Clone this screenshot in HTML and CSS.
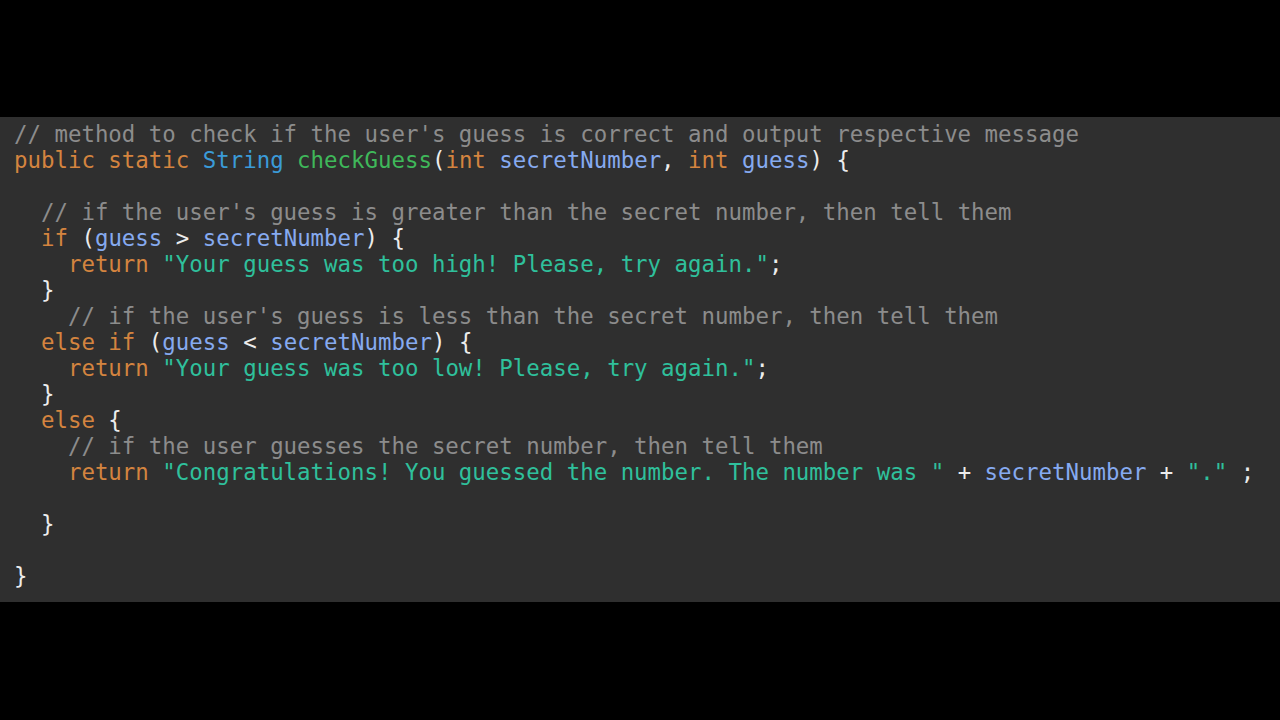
FILE: index.html
```html
<!DOCTYPE html>
<html lang="en">
<head>
<meta charset="utf-8">
<title>checkGuess</title>
<link rel="stylesheet" href="styles.css">
</head>
<body>
<main class="frame">
<pre class="code"><span class="c">// method to check if the user's guess is correct and output respective message</span>
<span class="k">public static</span> <span class="t">String</span> <span class="f">checkGuess</span>(<span class="k">int</span> <span class="v">secretNumber</span>, <span class="k">int</span> <span class="v">guess</span>) {

  <span class="c">// if the user's guess is greater than the secret number, then tell them</span>
  <span class="k">if</span> (<span class="v">guess</span> &gt; <span class="v">secretNumber</span>) {
    <span class="k">return</span> <span class="s">"Your guess was too high! Please, try again."</span>;
  }
    <span class="c">// if the user's guess is less than the secret number, then tell them</span>
  <span class="k">else if</span> (<span class="v">guess</span> &lt; <span class="v">secretNumber</span>) {
    <span class="k">return</span> <span class="s">"Your guess was too low! Please, try again."</span>;
  }
  <span class="k">else</span> {
    <span class="c">// if the user guesses the secret number, then tell them</span>
    <span class="k">return</span> <span class="s">"Congratulations! You guessed the number. The number was "</span> + <span class="v">secretNumber</span> + <span class="s">"."</span> ;

  }

}</pre>
</main>
</body>
</html>
```
FILE: styles.css
```css
html, body {
  margin: 0;
  padding: 0;
  background: #000;
  width: 1280px;
  height: 720px;
  overflow: hidden;
}
.frame {
  margin-top: 117px;
  height: 485px;
  background: #2f2f2f;
  box-sizing: border-box;
  padding: 4px 0 0 14px;
}
.code {
  margin: 0;
  font-family: "DejaVu Sans Mono", monospace;
  font-size: 22.4px;
  line-height: 26px;
  color: #ececec;
  white-space: pre;
}
.c { color: #8c8c8c; }
.k { color: #d4843f; }
.t { color: #3b9bd8; }
.f { color: #3fb85a; }
.v { color: #86aaf0; }
.s { color: #2fc09c; }
```
